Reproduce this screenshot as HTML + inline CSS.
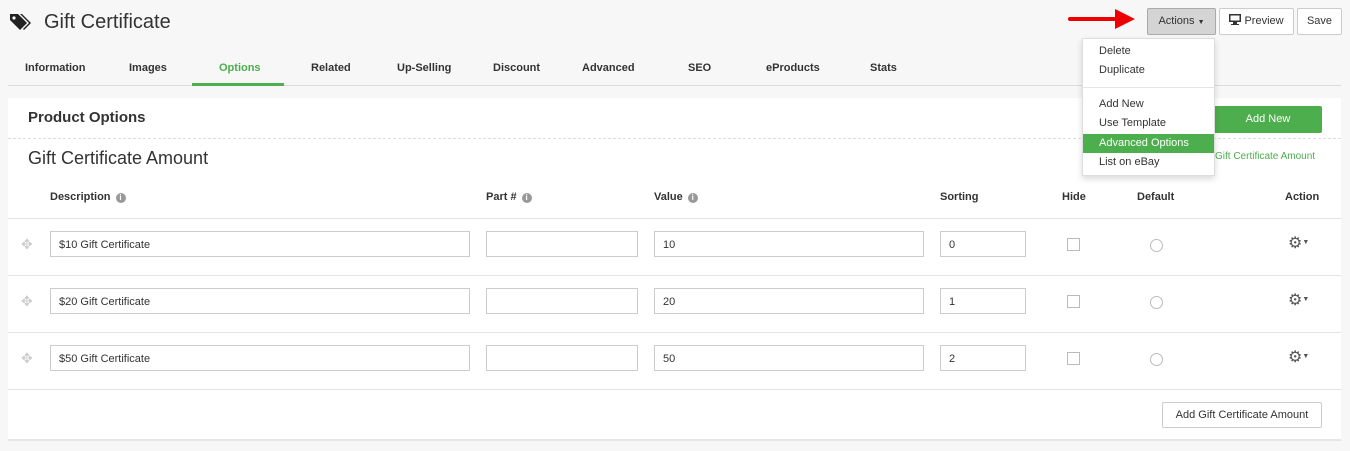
<!DOCTYPE html>
<html><head><meta charset="utf-8">
<style>
*{margin:0;padding:0;box-sizing:border-box}
body{width:1350px;height:451px;background:#f7f7f7;font-family:"Liberation Sans",sans-serif;color:#333;position:relative;overflow:hidden}
.a{position:absolute;white-space:nowrap}
.tab{position:absolute;top:62px;font-size:11px;font-weight:bold;color:#333}
.btn{position:absolute;border:1px solid #ccc;background:#fff;font-size:12px;text-align:center;border-radius:2px;color:#333}
.inp{position:absolute;height:26px;border:1px solid #ccc;background:#fff;font-size:11px;padding:7px 8px;color:#333}
.th{position:absolute;top:191px;font-size:11px;font-weight:bold;color:#333}
.hl{position:absolute;left:8px;width:1333px;height:1px;background:#e3e3e3}
.cb{position:absolute;width:13px;height:13px;border:1px solid #bbb;background:#fff}
.rd{position:absolute;width:13px;height:13px;border:1px solid #bbb;border-radius:50%;background:#fff}
.info{display:inline-block;width:10px;height:10px;border-radius:50%;background:#999;color:#fff;font-size:8px;text-align:center;line-height:10px;margin-left:5px;vertical-align:0}
.dd{position:absolute;left:1099px;font-size:11px;color:#333}
.gear{position:absolute;left:1288px;font-size:16px;color:#555}
.gear span{font-size:7px;vertical-align:4px}
.mv{position:absolute;left:21px;color:#ccc;font-size:14px}
</style></head><body>
<svg class="a" style="left:9px;top:12px" width="23" height="22" viewBox="0 0 23 22"><path d="M1 2h8l9 9-7 7-10-10z" fill="#222"/><circle cx="5" cy="6" r="1.6" fill="#fff"/><path d="M11 2h2l9 9-7 7-1-1 6-6z" fill="#222"/></svg>
<div class="a" style="left:44px;top:11px;font-size:20px;color:#333">Gift Certificate</div>

<div class="tab" style="left:25px">Information</div>
<div class="tab" style="left:129px">Images</div>
<div class="tab" style="left:219px;color:#4cae4c">Options</div>
<div class="tab" style="left:311px">Related</div>
<div class="tab" style="left:397px">Up-Selling</div>
<div class="tab" style="left:493px">Discount</div>
<div class="tab" style="left:582px">Advanced</div>
<div class="tab" style="left:688px">SEO</div>
<div class="tab" style="left:766px">eProducts</div>
<div class="tab" style="left:870px">Stats</div>
<div class="a" style="left:8px;top:85px;width:1333px;height:1px;background:#ddd"></div>
<div class="a" style="left:192px;top:83px;width:92px;height:3px;background:#4cae4c"></div>

<div class="a" style="left:8px;top:98px;width:1333px;height:343px;background:#fff;border-bottom:2px solid #e6e6e6"></div>
<div class="a" style="left:28px;top:109px;font-size:15px;font-weight:bold;color:#333">Product Options</div>
<div class="a" style="left:8px;top:138px;width:1333px;border-top:1px dashed #ddd"></div>
<div class="a" style="left:28px;top:148px;font-size:18px;color:#333">Gift Certificate Amount</div>
<div class="btn" style="left:1214px;top:106px;width:108px;height:27px;background:#4cae4c;border-color:#4cae4c;color:#fff;line-height:25px;font-size:11px">Add New</div>
<div class="a" style="left:1215px;top:151px;font-size:10px;color:#4cae4c">Gift Certificate Amount</div>

<div class="th" style="left:50px">Description<span class="info">i</span></div>
<div class="th" style="left:486px">Part #<span class="info">i</span></div>
<div class="th" style="left:654px">Value<span class="info">i</span></div>
<div class="th" style="left:940px">Sorting</div>
<div class="th" style="left:1062px">Hide</div>
<div class="th" style="left:1137px">Default</div>
<div class="th" style="left:1285px">Action</div>

<div class="hl" style="top:218px"></div>
<div class="hl" style="top:275px"></div>
<div class="hl" style="top:332px"></div>
<div class="hl" style="top:389px"></div>

<div class="mv" style="top:236px">✥</div>
<div class="inp" style="left:50px;top:231px;width:420px">$10 Gift Certificate</div>
<div class="inp" style="left:486px;top:231px;width:152px"></div>
<div class="inp" style="left:654px;top:231px;width:270px">10</div>
<div class="inp" style="left:940px;top:231px;width:86px">0</div>
<div class="cb" style="left:1067px;top:238px"></div>
<div class="rd" style="left:1150px;top:239px"></div>
<div class="gear" style="top:233px">⚙<span>▼</span></div>

<div class="mv" style="top:293px">✥</div>
<div class="inp" style="left:50px;top:288px;width:420px">$20 Gift Certificate</div>
<div class="inp" style="left:486px;top:288px;width:152px"></div>
<div class="inp" style="left:654px;top:288px;width:270px">20</div>
<div class="inp" style="left:940px;top:288px;width:86px">1</div>
<div class="cb" style="left:1067px;top:295px"></div>
<div class="rd" style="left:1150px;top:296px"></div>
<div class="gear" style="top:290px">⚙<span>▼</span></div>

<div class="mv" style="top:350px">✥</div>
<div class="inp" style="left:50px;top:345px;width:420px">$50 Gift Certificate</div>
<div class="inp" style="left:486px;top:345px;width:152px"></div>
<div class="inp" style="left:654px;top:345px;width:270px">50</div>
<div class="inp" style="left:940px;top:345px;width:86px">2</div>
<div class="cb" style="left:1067px;top:352px"></div>
<div class="rd" style="left:1150px;top:353px"></div>
<div class="gear" style="top:347px">⚙<span>▼</span></div>

<div class="btn" style="left:1162px;top:402px;width:160px;height:26px;line-height:24px;font-size:11px">Add Gift Certificate Amount</div>

<svg class="a" style="left:1066px;top:8px" width="70" height="22"><rect x="2" y="9" width="50" height="4" rx="2" fill="#e00"/><path d="M49 1l20 10-20 10z" fill="#e00"/></svg>
<div class="btn" style="left:1147px;top:8px;width:69px;height:27px;background:#d4d4d4;border-color:#aaa;line-height:25px;font-size:11px">Actions <span style="font-size:7px">▼</span></div>
<div class="btn" style="left:1219px;top:8px;width:75px;height:27px;line-height:25px;font-size:11px"><svg width="12" height="11" style="vertical-align:-1px"><rect x="0" y="0" width="12" height="8" fill="#333"/><rect x="1.5" y="1.5" width="9" height="5" fill="#fff"/><rect x="4" y="8" width="4" height="2" fill="#333"/><rect x="2" y="10" width="8" height="1" fill="#333"/></svg> Preview</div>
<div class="btn" style="left:1297px;top:8px;width:45px;height:27px;line-height:25px;font-size:11px">Save</div>

<div class="a" style="left:1082px;top:38px;width:133px;height:138px;background:#fff;border:1px solid #ddd;box-shadow:0 3px 6px rgba(0,0,0,.15)"></div>
<div class="dd" style="top:45px">Delete</div>
<div class="dd" style="top:64px">Duplicate</div>
<div class="a" style="left:1083px;top:87px;width:131px;height:1px;background:#e5e5e5"></div>
<div class="dd" style="top:98px">Add New</div>
<div class="dd" style="top:117px">Use Template</div>
<div class="a" style="left:1083px;top:134px;width:131px;height:19px;background:#4cae4c"></div>
<div class="dd" style="top:137px;color:#fff">Advanced Options</div>
<div class="dd" style="top:156px">List on eBay</div>
</body></html>
